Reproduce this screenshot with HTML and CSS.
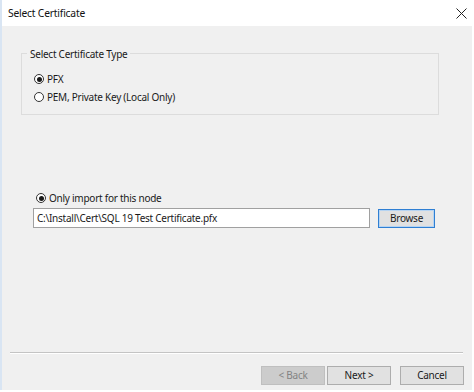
FILE: index.html
```html
<!DOCTYPE html>
<html>
<head>
<meta charset="utf-8">
<link rel="stylesheet" href="styles.css">
</head>
<body>
<div class="window">
  <div class="titlebar">
    <span class="title">Select Certificate</span>
    <svg class="close" width="11" height="11" viewBox="0 0 11 11"><path d="M0.5 0.5 L10.5 10.5 M10.5 0.5 L0.5 10.5" stroke="#222" stroke-width="1" fill="none"/></svg>
  </div>
  <div class="content">
    <div class="group">
      <span class="legend">Select Certificate Type</span>
      <label class="radio-row first"><span class="radio checked"></span><span>PFX</span></label>
      <label class="radio-row"><span class="radio"></span><span>PEM, Private Key (Local Only)</span></label>
    </div>
    <div class="node">
      <label class="radio-row"><span class="radio checked"></span><span>Only import for this node</span></label>
      <div class="path-row">
        <div class="input">C:\Install\Cert\SQL 19 Test Certificate.pfx</div>
        <div class="btn browse">Browse</div>
      </div>
    </div>
    <div class="spacer"></div>
    <div class="separator"></div>
    <div class="buttons">
      <div class="btn disabled">&lt; Back</div>
      <div class="btn next">Next &gt;</div>
      <div class="btn cancel">Cancel</div>
    </div>
  </div>
</div>
</body>
</html>
```
FILE: styles.css
```css
html, body {
  margin: 0;
  padding: 0;
  background: #ffffff;
}
body {
  width: 474px;
  height: 392px;
  overflow: hidden;
  font-family: "Noto Sans", "Open Sans", sans-serif;
  font-size: 10px;
  letter-spacing: -0.25px;
  color: #1a1a1a;
}
.window {
  display: flex;
  flex-direction: column;
  height: 390px;
  border-left: 2px solid #d9e5f3;
  border-right: 2px solid #ffffff;
  box-sizing: border-box;
  width: 474px;
}
.titlebar {
  height: 26px;
  background: #ffffff;
  display: flex;
  align-items: center;
  justify-content: space-between;
  padding: 0 5px 0 6px;
  flex: none;
}
.title {
  font-size: 10.3px;
  letter-spacing: -0.2px;
  color: #111;
  margin-top: -1px;
}
.close {
  display: block;
}
.content {
  flex: 1;
  background: #f0f0f0;
  display: flex;
  flex-direction: column;
  padding-top: 27px;
}
.group {
  margin-left: 19px;
  width: 418px;
  height: 62px;
  box-sizing: border-box;
  border: 1px solid #dcdcdc;
  display: flex;
  flex-direction: column;
  padding-left: 12px;
}
.legend {
  align-self: flex-start;
  margin-top: -8px;
  margin-left: -7px;
  height: 16px;
  line-height: 16px;
  padding: 0 3px;
  background: #f0f0f0;
}
.radio-row {
  display: flex;
  align-items: center;
  height: 18px;
  gap: 3px;
}
.radio-row.first {
  margin-top: 8px;
}
.radio {
  width: 10px;
  height: 10px;
  border: 1px solid #333;
  border-radius: 50%;
  background: #fff;
  box-sizing: border-box;
  display: flex;
  align-items: center;
  justify-content: center;
}
.radio.checked::after {
  content: "";
  width: 5px;
  height: 5px;
  border-radius: 50%;
  background: #1a1a1a;
}
.node {
  margin-top: 74px;
  margin-left: 31px;
  display: flex;
  flex-direction: column;
}
.node .radio-row {
  padding-left: 3px;
}
.path-row {
  display: flex;
  align-items: center;
  margin-top: 1px;
}
.input {
  width: 337px;
  height: 20px;
  box-sizing: border-box;
  border: 1px solid #a0a0a0;
  background: #fff;
  line-height: 18px;
  padding-left: 3px;
  white-space: nowrap;
}
.btn {
  box-sizing: border-box;
  height: 19px;
  line-height: 17px;
  text-align: center;
  background: #e1e1e1;
  border: 1px solid #adadad;
  color: #1a1a1a;
}
.browse {
  width: 57px;
  margin-left: 8px;
  height: 19px;
  border: 1px solid #2f7fd3;
  box-shadow: inset 0 0 0 1px #b6d4f2;
}
.spacer {
  flex: 1;
}
.separator {
  margin-left: 8px;
  width: 453px;
  height: 1px;
  background: #c4c4c4;
  border-bottom: 1px solid #ffffff;
}
.buttons {
  display: flex;
  justify-content: flex-end;
  padding: 12px 8px 5px 0;
}
.btn.disabled {
  width: 64px;
  background: #cccccc;
  border-color: #bfbfbf;
  color: #838383;
}
.btn.next {
  width: 64px;
  margin-left: 2px;
}
.btn.cancel {
  width: 64px;
  margin-left: 9px;
}
```
